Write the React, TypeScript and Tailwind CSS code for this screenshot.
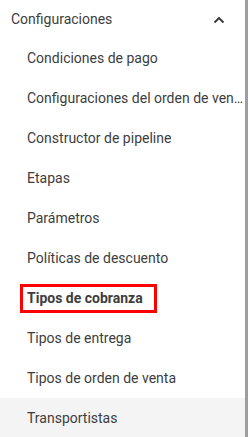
import React from 'react';

const items = [
  'Condiciones de pago',
  'Configuraciones del orden de venta',
  'Constructor de pipeline',
  'Etapas',
  'Parámetros',
  'Políticas de descuento',
  'Tipos de cobranza',
  'Tipos de entrega',
  'Tipos de orden de venta',
  'Transportistas',
];

const App: React.FC = () => {
  return (
    <div className="flex h-[437px] w-[248px] overflow-hidden bg-white font-['Roboto',sans-serif] text-[14px] text-[#3d3d3d]">
      <div className="flex min-w-0 flex-1 flex-col">
        {/* Section header */}
        <div className="flex h-[38px] shrink-0 items-center justify-between pl-[11px] pr-[20px]">
          <span>Configuraciones</span>
          <svg width="12" height="8" viewBox="0 0 12 8" className="mt-[1px]">
            <path d="M1.5 6.5 L6 2 L10.5 6.5" fill="none" stroke="#333" strokeWidth="1.8" />
          </svg>
        </div>

        {/* Sub items */}
        <nav className="flex flex-col">
          {items.map((label) => {
            const active = label === 'Tipos de cobranza';
            const last = label === 'Transportistas';
            return (
              <div
                key={label}
                className={`flex h-[40px] shrink-0 items-center pr-[1px] ${last ? 'bg-[#f4f4f4] pl-[27px]' : active ? 'pl-[20px]' : 'pl-[27px]'}`}
              >
                {active ? (
                  <span className="border-[3px] border-[#ff0000] pl-[4px] pr-[11px] py-[2px] leading-[19px] font-bold">
                    {label}
                  </span>
                ) : (
                  <span className="truncate">{label}</span>
                )}
              </div>
            );
          })}
        </nav>
      </div>
      {/* scrollbar strip */}
      <div className="w-[3px] shrink-0 bg-[#9e9e9e]" />
    </div>
  );
};

export default App;
